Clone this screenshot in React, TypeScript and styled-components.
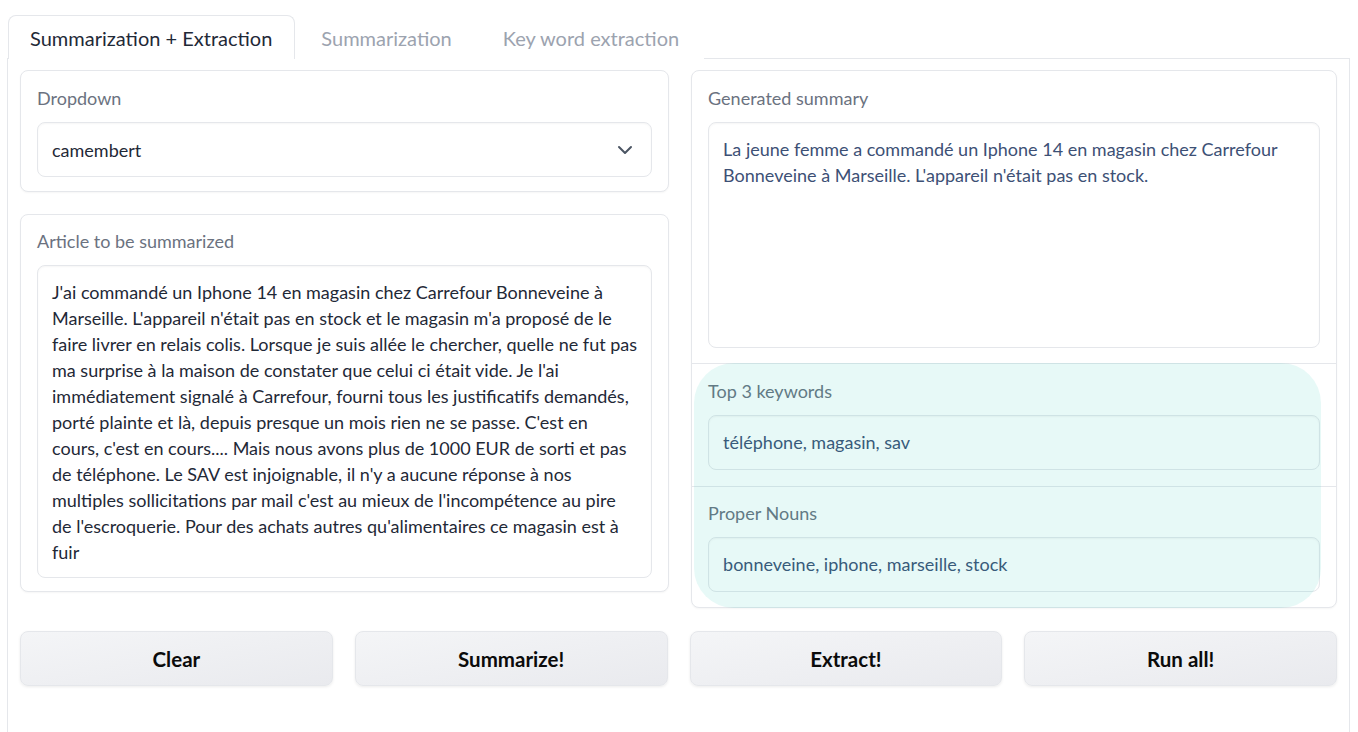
import styled, { createGlobalStyle } from "styled-components";

const GlobalStyle = createGlobalStyle`
  html, body {
    margin: 0;
    padding: 0;
    background: #ffffff;
    font-family: Lato, "Open Sans", sans-serif;
    overflow: hidden;
  }
  * {
    box-sizing: border-box;
  }
`;

const Page = styled.div`
  padding: 15px 8px 0 7px;
  width: 1358px;
`;

const TabBar = styled.nav`
  display: flex;
  height: 43px;
  margin-left: 1px;
  position: relative;
  z-index: 1;
`;

const Tab = styled.button<{ $active?: boolean }>`
  font-family: inherit;
  font-size: 20px;
  padding: ${(p) => (p.$active ? "0 22px 0 21px" : "0 24px 0 25px")};
  height: 44px;
  background: #ffffff;
  color: ${(p) => (p.$active ? "#1f2937" : "#9ca3af")};
  border: 1px solid ${(p) => (p.$active ? "#e5e7eb" : "transparent")};
  border-bottom: none;
  border-radius: 8px 8px 0 0;
  cursor: pointer;
`;

const Panel = styled.section`
  border: 1px solid #e5e7eb;
  border-bottom: none;
  padding: 11px 12px 0 12px;
  height: 700px;
`;

const Columns = styled.div`
  display: grid;
  grid-template-columns: 1fr 1fr;
  gap: 22px;
  align-items: start;
`;

const Column = styled.div`
  display: flex;
  flex-direction: column;
  gap: 22px;
`;

const Block = styled.div`
  border: 1px solid #e5e7eb;
  border-radius: 8px;
  background: #ffffff;
  box-shadow: 0 1px 2px rgba(0, 0, 0, 0.04);
`;

const Section = styled.div<{ $divided?: boolean; $top: number; $bottom: number }>`
  padding: ${(p) => `${p.$top}px 16px ${p.$bottom}px 16px`};
  border-top: ${(p) => (p.$divided ? "1px solid #e5e7eb" : "none")};
`;

const Label = styled.div`
  font-size: 18px;
  line-height: 24px;
  color: #6b7280;
  margin-bottom: 12px;
`;

const Field = styled.div<{ $height: number; $tone?: "dark" | "blue" }>`
  height: ${(p) => p.$height}px;
  border: 1px solid #e5e7eb;
  border-radius: 8px;
  padding: 13px 14px 12px 14px;
  font-size: 18px;
  line-height: 26px;
  color: ${(p) => (p.$tone === "blue" ? "#3d5075" : "#1f2937")};
  white-space: pre;
  overflow: hidden;
  box-shadow: inset 0 1px 2px rgba(0, 0, 0, 0.04);
  background: transparent;
`;

const Select = styled.div`
  height: 55px;
  display: flex;
  align-items: center;
  justify-content: space-between;
  border: 1px solid #e5e7eb;
  border-radius: 8px;
  padding: 0 18px 0 14px;
  font-size: 18px;
  color: #1f2937;
  box-shadow: inset 0 1px 2px rgba(0, 0, 0, 0.04);
`;

const Highlight = styled.div`
  position: relative;
  &::after {
    content: "";
    position: absolute;
    left: 2px;
    right: 15px;
    top: 0;
    bottom: -1px;
    border-radius: 40px;
    background: rgba(20, 200, 180, 0.1);
    pointer-events: none;
  }
`;

const ButtonRow = styled.div`
  display: grid;
  grid-template-columns: repeat(4, 1fr);
  gap: 22px;
  margin-top: 23px;
`;

const ActionButton = styled.button`
  height: 55px;
  border: 1px solid #e5e7eb;
  border-radius: 8px;
  background: linear-gradient(170deg, #f4f5f7 0%, #e9eaee 100%);
  box-shadow: 0 1px 3px rgba(0, 0, 0, 0.08);
  font-family: inherit;
  font-size: 20.5px;
  font-weight: 700;
  color: #0b0b0b;
  cursor: pointer;
`;

const Chevron = () => (
  <svg width="16" height="10" viewBox="0 0 16 10" fill="none">
    <path d="M2 2l6 6 6-6" stroke="#4b5563" strokeWidth="2" strokeLinecap="round" strokeLinejoin="round" />
  </svg>
);

const article = [
  "J'ai commandé un Iphone 14 en magasin chez Carrefour Bonneveine à",
  "Marseille. L'appareil n'était pas en stock et le magasin m'a proposé de le",
  "faire livrer en relais colis. Lorsque je suis allée le chercher, quelle ne fut pas",
  "ma surprise à la maison de constater que celui ci était vide. Je l'ai",
  "immédiatement signalé à Carrefour, fourni tous les justificatifs demandés,",
  "porté plainte et là, depuis presque un mois rien ne se passe. C'est en",
  "cours, c'est en cours.... Mais nous avons plus de 1000 EUR de sorti et pas",
  "de téléphone. Le SAV est injoignable, il n'y a aucune réponse à nos",
  "multiples sollicitations par mail c'est au mieux de l'incompétence au pire",
  "de l'escroquerie. Pour des achats autres qu'alimentaires ce magasin est à",
  "fuir",
].join("\n");

const summary = [
  "La jeune femme a commandé un Iphone 14 en magasin chez Carrefour",
  "Bonneveine à Marseille. L'appareil n'était pas en stock.",
].join("\n");

export default function App() {
  return (
    <>
      <GlobalStyle />
      <Page>
        <TabBar>
          <Tab $active>Summarization + Extraction</Tab>
          <Tab>Summarization</Tab>
          <Tab>Key word extraction</Tab>
        </TabBar>
        <Panel>
          <Columns>
            <Column>
              <Block>
                <Section $top={15} $bottom={14}>
                  <Label>Dropdown</Label>
                  <Select>
                    camembert
                    <Chevron />
                  </Select>
                </Section>
              </Block>
              <Block>
                <Section $top={14} $bottom={13}>
                  <Label>Article to be summarized</Label>
                  <Field $height={313}>{article}</Field>
                </Section>
              </Block>
            </Column>
            <Column>
              <Block>
                <Section $top={15} $bottom={15}>
                  <Label>Generated summary</Label>
                  <Field $height={226} $tone="blue">{summary}</Field>
                </Section>
                <Highlight>
                  <Section $divided $top={15} $bottom={16}>
                    <Label>Top 3 keywords</Label>
                    <Field $height={55} $tone="blue">téléphone, magasin, sav</Field>
                  </Section>
                  <Section $divided $top={14} $bottom={15}>
                    <Label>Proper Nouns</Label>
                    <Field $height={55} $tone="blue">bonneveine, iphone, marseille, stock</Field>
                  </Section>
                </Highlight>
              </Block>
            </Column>
          </Columns>
          <ButtonRow>
            <ActionButton>Clear</ActionButton>
            <ActionButton>Summarize!</ActionButton>
            <ActionButton>Extract!</ActionButton>
            <ActionButton>Run all!</ActionButton>
          </ButtonRow>
        </Panel>
      </Page>
    </>
  );
}
